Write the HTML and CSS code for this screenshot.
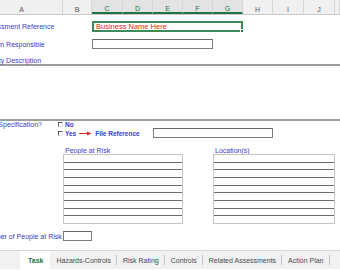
FILE: index.html
```html
<!DOCTYPE html>
<html lang="en">
<head>
    <meta charset="UTF-8">
    <title>Risk Assessment - Task</title>
    <link rel="stylesheet" href="styles.css">
</head>
<body>
    <div class="grid col-head">
        <div class="ch">A</div>
        <div class="ch">B</div>
        <div class="ch sel">C</div>
        <div class="ch sel">D</div>
        <div class="ch sel">E</div>
        <div class="ch sel">F</div>
        <div class="ch sel">G</div>
        <div class="ch">H</div>
        <div class="ch">I</div>
        <div class="ch">J</div>
        <div class="ch"></div>
    </div>

    <div class="sheet">
        <div class="gap-6"></div>
        <div class="grid row-ref">
            <div class="label">Assessment Reference</div>
            <div class="field active">Business Name Here<span class="handle"></span></div>
        </div>

        <div class="gap-7"></div>
        <div class="grid row-10">
            <div class="label">Person Responsible</div>
            <div class="box span-cf"></div>
        </div>

        <div class="gap-8"></div>
        <div class="grid row-7">
            <div class="label">Activity Description</div>
        </div>
        <div class="rule"></div>
        <div class="desc-area"></div>
        <div class="rule"></div>

        <div class="grid row-7">
            <div class="checks">
                <span class="label spec">Task Specification?</span>
                <span class="cb"></span><span class="opt">No</span>
            </div>
        </div>
        <div class="grid row-10">
            <div class="checks indent">
                <span class="cb"></span><span class="opt">Yes</span>
                <svg class="arrow" width="13" height="5" viewBox="0 0 13 5">
                    <line x1="0" y1="2.5" x2="9" y2="2.5" stroke="#e02424" stroke-width="1"/>
                    <polygon points="8,0.5 12.5,2.5 8,4.5" fill="#e02424"/>
                </svg>
                <span class="opt">File Reference</span>
            </div>
            <div class="box span-eh"></div>
        </div>

        <div class="gap-9"></div>
        <div class="grid row-7">
            <div class="label list-title span-b">People at Risk</div>
            <div class="label list-title span-g">Location(s)</div>
        </div>
        <div class="grid row-list">
            <div class="list span-be">
                <div class="line"></div><div class="line"></div><div class="line"></div>
                <div class="line"></div><div class="line"></div><div class="line"></div>
                <div class="line"></div><div class="line"></div><div class="line"></div>
            </div>
            <div class="list span-gj">
                <div class="line"></div><div class="line"></div><div class="line"></div>
                <div class="line"></div><div class="line"></div><div class="line"></div>
                <div class="line"></div><div class="line"></div><div class="line"></div>
            </div>
        </div>

        <div class="gap-7"></div>
        <div class="grid row-10">
            <div class="label">Number of People at Risk</div>
            <div class="box span-b"></div>
        </div>
    </div>

    <div class="tabs">
        <div class="tab-nav"></div>
        <div class="tab active">Task</div>
        <div class="tab">Hazards-Controls</div>
        <div class="tab">Risk Rating</div>
        <div class="tab">Controls</div>
        <div class="tab">Related Assessments</div>
        <div class="tab">Action Plan</div>
    </div>
</body>
</html>
```

FILE: styles.css
```css
* {
    margin: 0;
    padding: 0;
    box-sizing: border-box;
}

body {
    width: 340px;
    height: 270px;
    overflow: hidden;
    font-family: 'Liberation Sans', Arial, sans-serif;
    background: #fff;
    display: flex;
    flex-direction: column;
}

/* sheet is scrolled a little to the right, column A starts off screen */
.grid {
    display: grid;
    grid-template-columns: 82px 29px 31px 30px 30px 30px 30px 30px 31px 31px 1fr;
    margin-left: -19px;
}

.col-head {
    height: 15px;
    flex-shrink: 0;
    background: #f0f0f0;
    border-bottom: 1px solid #c9c9c9;
}

.ch {
    font-size: 7px;
    color: #555;
    text-align: center;
    padding-top: 5px;
    line-height: 9px;
    border-right: 1px solid #d6d6d6;
}

.ch.sel {
    background: #e3e3e3;
    color: #217346;
    border-bottom: 2px solid #217346;
    line-height: 7px;
}

.sheet {
    flex: 1;
}

.gap-6 { height: 6px; }
.gap-7 { height: 7px; }
.gap-8 { height: 8px; }
.gap-9 { height: 9px; }

.row-ref { height: 11px; }
.row-10 { height: 10px; }
.row-7 { height: 7px; }
.row-list { height: 70px; }

.label {
    grid-column: 1 / 2;
    font-size: 7px;
    line-height: 7px;
    color: #3a3acc;
    white-space: nowrap;
    padding-left: 1px;
    align-self: center;
}

.field {
    grid-column: 3 / 8;
    position: relative;
    font-size: 7.5px;
    line-height: 7px;
    color: #e02424;
    padding: 0 0 0 2px;
    display: flex;
    align-items: center;
}

.field.active {
    border: 2px solid #3f8a5d;
}

.handle {
    position: absolute;
    right: -3px;
    bottom: -3px;
    width: 4px;
    height: 4px;
    background: #217346;
    border: 1px solid #fff;
}

.box {
    border: 1px solid #7d7d7d;
    border-top-color: #6a6a6a;
}

.span-b { grid-column: 2 / 3; }
.span-cf { grid-column: 3 / 7; }
.span-eh { grid-column: 5 / 9; }
.span-be { grid-column: 2 / 6; }
.span-g { grid-column: 7 / 8; }
.span-gj { grid-column: 7 / 11; }

.list-title {
    padding-left: 2px;
}

.rule {
    height: 2px;
    background: #9d9d9d;
}

.desc-area {
    height: 53px;
}

.checks {
    grid-column: 1 / 5;
    display: flex;
    align-items: center;
    gap: 1px;
    font-size: 7px;
    line-height: 7px;
    color: #3a3acc;
}

.checks.indent {
    padding-left: 77px;
}

.spec {
    width: 76px;
    flex-shrink: 0;
}

.cb {
    width: 5px;
    height: 5px;
    margin-right: 1px;
    border-top: 1px solid #5a5a5a;
    border-left: 1px solid #5a5a5a;
    border-right: 1px solid #e6e6e6;
    border-bottom: 1px solid #e6e6e6;
}

.opt {
    font-weight: bold;
    font-size: 6.5px;
}

.arrow {
    margin: 0 2px 0 2px;
}

.list {
    display: flex;
    flex-direction: column;
    border: 1px solid #c4c4c4;
}

.line {
    flex: 1;
    border-bottom: 1px solid #6b6b6b;
}

.line:last-child {
    border-bottom: none;
}

.tabs {
    height: 19px;
    flex-shrink: 0;
    display: flex;
    background: #f1f1f1;
    border-top: 1px solid #d8d8d8;
    margin-bottom: 1px;
}

.tab-nav {
    width: 20px;
}

.tab {
    position: relative;
    font-size: 7px;
    color: #4a4a4a;
    padding: 0 6px;
    display: flex;
    align-items: center;
    white-space: nowrap;
}

.tab::after {
    content: '';
    position: absolute;
    right: 0;
    top: 4px;
    bottom: 4px;
    width: 1px;
    background: #c2c2c2;
}

.tab.active {
    background: #fff;
    color: #217346;
    font-weight: bold;
    padding: 0 7px 0 8px;
}

.tab.active::after {
    display: none;
}
```
